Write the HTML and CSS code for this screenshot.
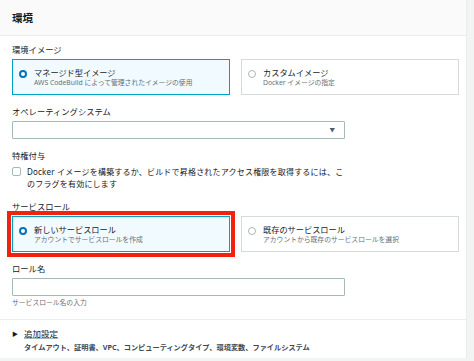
FILE: index.html
```html
<!DOCTYPE html>
<html lang="ja">
<head>
  <meta charset="UTF-8" />
  <title>環境</title>
  <link rel="stylesheet" href="styles.css">
</head>
<body>
  <div class="panel">
    <div class="panel-head">環境</div>

    <div class="panel-body">
      <div class="field">
        <div class="label">環境イメージ</div>
        <div class="tiles">
          <div class="tile selected">
            <span class="radio on"></span>
            <div>
              <div class="tile-title">マネージド型イメージ</div>
              <div class="tile-sub">AWS CodeBuild によって管理されたイメージの使用</div>
            </div>
          </div>
          <div class="tile">
            <span class="radio"></span>
            <div>
              <div class="tile-title">カスタムイメージ</div>
              <div class="tile-sub">Docker イメージの指定</div>
            </div>
          </div>
        </div>
      </div>

      <div class="field">
        <div class="label">オペレーティングシステム</div>
        <div class="select"><span class="caret">▼</span></div>
      </div>

      <div class="field">
        <div class="label">特権付与</div>
        <div class="check-row">
          <span class="checkbox"></span>
          <div class="check-text">Docker イメージを構築するか、ビルドで昇格されたアクセス権限を取得するには、このフラグを有効にします</div>
        </div>
      </div>

      <div class="field">
        <div class="label">サービスロール</div>
        <div class="tiles">
          <div class="tile selected marked">
            <span class="radio on"></span>
            <div>
              <div class="tile-title">新しいサービスロール</div>
              <div class="tile-sub">アカウントでサービスロールを作成</div>
            </div>
          </div>
          <div class="tile">
            <span class="radio"></span>
            <div>
              <div class="tile-title">既存のサービスロール</div>
              <div class="tile-sub">アカウントから既存のサービスロールを選択</div>
            </div>
          </div>
        </div>
      </div>

      <div class="field">
        <div class="label">ロール名</div>
        <div class="input"></div>
        <div class="hint">サービスロール名の入力</div>
      </div>
    </div>

    <div class="expander">
      <div class="exp-head"><span class="tri">▶</span><span class="exp-title">追加設定</span></div>
      <div class="exp-sub">タイムアウト、証明書、VPC、コンピューティングタイプ、環境変数、ファイルシステム</div>
    </div>
  </div>
</body>
</html>
```

FILE: styles.css
```css
body {
  margin: 0;
  background: #f2f3f3;
  font-family: "Noto Sans", "Noto Sans CJK JP", sans-serif;
  color: #16191f;
}
.panel {
  width: 467px;
  height: 358px;
  background: #fff;
  border-right: 1px solid #eaeded;
  box-sizing: border-box;
}
.panel-head {
  height: 36px;
  box-sizing: border-box;
  padding: 0 12px;
  display: flex;
  align-items: center;
  background: #fafafa;
  border-bottom: 1px solid #eaeded;
  font-size: 10.5px;
  font-weight: bold;
}
.panel-body { padding: 8px 7px 0 12px; }
.field { margin-bottom: 11px; }
.label { font-size: 8.3px; line-height: 12px; margin-bottom: 3px; }

.tiles { display: flex; gap: 11px; }
.tile {
  width: 219px;
  height: 36px;
  box-sizing: border-box;
  border: 1px solid #d5dbdb;
  display: flex;
  align-items: center;
  padding-left: 6px;
  gap: 7px;
}
.tile.selected { background: #f1faff; border-color: #00a1c9; }
.tile.marked { outline: 4px solid #f2230e; outline-offset: 1px; }
.radio {
  width: 8px;
  height: 8px;
  border-radius: 50%;
  border: 1px solid #aab7b8;
  box-sizing: border-box;
  flex: none;
  margin-top: -7px;
  background: #fff;
}
.radio.on { border: 2.5px solid #0073bb; }
.tile-title { font-size: 8.2px; line-height: 11px; }
.tile-sub { font-size: 6.8px; line-height: 10px; color: #687078; }

.select, .input {
  width: 333px;
  height: 18px;
  box-sizing: border-box;
  border: 1px solid #aab7b8;
  border-radius: 1px;
}
.select { display: flex; justify-content: flex-end; align-items: center; padding-right: 9px; }
.caret { font-size: 5.5px; color: #545b64; }

.check-row { display: flex; gap: 6px; }
.checkbox {
  width: 9px;
  height: 9px;
  border: 1px solid #aab7b8;
  border-radius: 2px;
  box-sizing: border-box;
  flex: none;
  margin-top: 2px;
}
.check-text { font-size: 8px; line-height: 12px; width: 318px; letter-spacing: 0.2px; padding-top: 1px; }
.hint { font-size: 6.8px; line-height: 10px; color: #687078; margin-top: 2px; }

.expander {
  margin-top: 8px;
  border-top: 1px solid #eaeded;
  padding: 7px 12px 0;
}
.exp-head { display: flex; align-items: center; gap: 6px; font-size: 8.5px; line-height: 14px; }
.tri { font-size: 6px; }
.exp-title { text-decoration: underline; text-decoration-color: #aab7b8; }
.exp-sub { font-size: 7.2px; line-height: 12px; font-weight: bold; color: #414750; padding-left: 12px; }
```
